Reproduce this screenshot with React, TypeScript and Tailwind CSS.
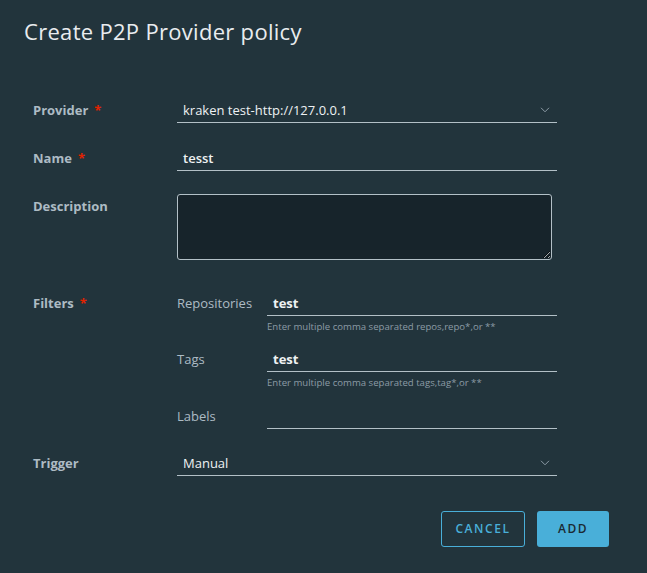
import React from 'react';

const font = { fontFamily: '"Open Sans", "Noto Sans", sans-serif' };

function Chevron() {
  return (
    <svg width="10" height="6" viewBox="0 0 10 6" className="text-[#8c9ba5]">
      <path d="M1 0.8l4 4 4-4" fill="none" stroke="currentColor" strokeWidth="1" />
    </svg>
  );
}

function Label({ text, required }: { text: string; required?: boolean }) {
  return (
    <div className="w-[144px] shrink-0 text-[13px] leading-[24px] font-bold text-[#adbbc4]">
      {text}
      {required && <span className="ml-[6px] text-[#e12200]">*</span>}
    </div>
  );
}

function Select({ value }: { value: string }) {
  return (
    <div className="w-[380px] h-[25px] border-b border-[#b3c0c7] flex items-center justify-between pl-[6px] pr-[7px]">
      <span className="text-[13px] leading-[24px] text-[#eef1f3]">{value}</span>
      <Chevron />
    </div>
  );
}

function TextInput({ value, width }: { value: string; width: string }) {
  return (
    <div className={`${width} h-[25px] border-b border-[#b3c0c7] pl-[6px] flex items-center`}>
      <span className="text-[13px] leading-[24px] text-[#eef1f3] font-semibold">{value}</span>
    </div>
  );
}

function FilterRow({ label, value, hint }: { label: string; value: string; hint?: string }) {
  return (
    <div className="flex">
      <div className="w-[90px] shrink-0 text-[13px] leading-[24px] text-[#adbbc4]">{label}</div>
      <div>
        <div className="w-[290px] h-[25px] border-b border-[#b3c0c7] pl-[6px] flex items-center">
          <span className="text-[13px] leading-[24px] text-[#eef1f3] font-bold">{value}</span>
        </div>
        {hint && (
          <div className="mt-[4px] text-[9.6px] leading-[14px] text-[#8c9ba5]">{hint}</div>
        )}
      </div>
    </div>
  );
}

export default function App() {
  return (
    <div className="w-[647px] h-[573px] bg-[#22343c] overflow-hidden" style={font}>
      <div className="pl-[24px] pt-[17px] h-[98px]">
        <h1 className="text-[22px] leading-[28px] tracking-[0.3px] text-[#e9ecef] font-normal">Create P2P Provider policy</h1>
      </div>

      <div className="pl-[33px]">
        <div className="flex">
          <Label text="Provider" required />
          <Select value="kraken test-http://127.0.0.1" />
        </div>

        <div className="flex mt-[23px]">
          <Label text="Name" required />
          <TextInput value="tesst" width="w-[380px]" />
        </div>

        <div className="flex mt-[23px]">
          <Label text="Description" />
          <textarea className="w-[375px] h-[66px] rounded-[3px] border border-[#b3c0c7] bg-[#17242b] resize-y outline-none" />
        </div>

        <div className="flex mt-[31px]">
          <Label text="Filters" required />
          <div className="flex flex-col">
            <FilterRow label="Repositories" value="test" hint="Enter multiple comma separated repos,repo*,or **" />
            <div className="mt-[13px]">
              <FilterRow label="Tags" value="test" hint="Enter multiple comma separated tags,tag*,or **" />
            </div>
            <div className="mt-[14px]">
              <FilterRow label="Labels" value="" />
            </div>
          </div>
        </div>

        <div className="flex mt-[22px]">
          <Label text="Trigger" />
          <Select value="Manual" />
        </div>
      </div>

      <div className="flex justify-end gap-[12px] pr-[38px] mt-[35px]">
        <button className="w-[84px] h-[36px] rounded-[3px] border border-[#49afd9] text-[#49afd9] text-[12px] font-semibold tracking-[0.13em] uppercase">
          Cancel
        </button>
        <button className="w-[72px] h-[36px] rounded-[3px] bg-[#49afd9] text-[#1b2a32] text-[12px] font-semibold tracking-[0.13em] uppercase">
          Add
        </button>
      </div>
    </div>
  );
}
